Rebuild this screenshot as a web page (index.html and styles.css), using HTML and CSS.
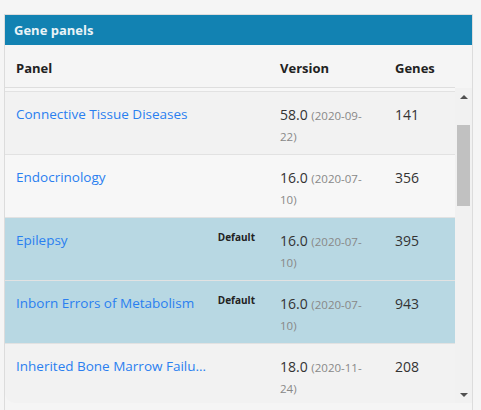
FILE: index.html
```html
<!DOCTYPE html>
<html lang="en">
<head>
  <meta charset="UTF-8" />
  <title>Gene panels</title>
  <link rel="stylesheet" href="styles.css">
</head>
<body>

  <!-- Gene panels card -->
  <div class="card">
    <div class="card-header">Gene panels</div>

    <!-- Fixed column headings -->
    <div class="head-wrap">
      <table class="grid">
        <colgroup>
          <col class="c-panel"><col class="c-version"><col class="c-genes">
        </colgroup>
        <thead>
          <tr><th>Panel</th><th>Version</th><th>Genes</th></tr>
        </thead>
      </table>
    </div>

    <!-- Rows + scrollbar -->
    <div class="body-row">
      <div class="rows">
        <div class="peek"></div>
        <table class="grid">
          <colgroup>
            <col class="c-panel"><col class="c-version"><col class="c-genes">
          </colgroup>
          <tbody>
            <tr>
              <td><a href="#" class="name">Connective Tissue Diseases</a></td>
              <td>58.0 <span class="date">(2020-09-22)</span></td>
              <td>141</td>
            </tr>
            <tr>
              <td><a href="#" class="name">Endocrinology</a></td>
              <td>16.0 <span class="date">(2020-07-10)</span></td>
              <td>356</td>
            </tr>
            <tr class="selected">
              <td><span class="badge">Default</span><a href="#" class="name">Epilepsy</a></td>
              <td>16.0 <span class="date">(2020-07-10)</span></td>
              <td>395</td>
            </tr>
            <tr class="selected">
              <td><span class="badge">Default</span><a href="#" class="name">Inborn Errors of Metabolism</a></td>
              <td>16.0 <span class="date">(2020-07-10)</span></td>
              <td>943</td>
            </tr>
            <tr>
              <td><a href="#" class="name">Inherited Bone Marrow Failure</a></td>
              <td>18.0 <span class="date">(2020-11-24)</span></td>
              <td>208</td>
            </tr>
          </tbody>
        </table>
      </div>

      <!-- Scrollbar -->
      <div class="scrollbar">
        <div class="arrow">
          <svg width="8" height="4" viewBox="0 0 8 4"><polygon points="0,4 4,0 8,4" fill="#505050"/></svg>
        </div>
        <div class="track">
          <div class="thumb"></div>
        </div>
        <div class="arrow">
          <svg width="8" height="4" viewBox="0 0 8 4"><polygon points="0,0 8,0 4,4" fill="#505050"/></svg>
        </div>
      </div>
    </div>
  </div>

</body>
</html>
```

FILE: styles.css
```css
/* ----- Base ----- */
* {
  box-sizing: border-box;
}

html, body {
  margin: 0;
  height: 100%;
  overflow: hidden;
  background: #f5f5f5;
  font-family: "Open Sans", "Noto Sans", sans-serif;
  font-size: 13px;
  color: #333;
}

/* ----- Card ----- */
.card {
  width: 469px;
  margin: 14px 0 0 4px;
  padding-bottom: 20px;
  border: 1px solid #dcdcdc;
  background: #f5f5f5;
}

.card-header {
  height: 30px;
  line-height: 30px;
  padding-left: 9px;
  background: #1282b2;
  color: #e9f3f7;
  font-weight: 700;
  font-size: 13px;
}

/* ----- Tables ----- */
.grid {
  width: 450px;
  table-layout: fixed;
  border-collapse: collapse;
}
.c-panel   { width: 264px; }
.c-version { width: 115px; }
.c-genes   { width: 71px; }

.head-wrap {
  height: 43px;
}
.head-wrap th {
  height: 42px;
  padding: 4px 11px 0;
  text-align: left;
  font-weight: 700;
  color: #222;
  background: #f5f5f5;
  border-bottom: 1px solid #dedede;
}

/* ----- Body with scrollbar ----- */
.body-row {
  display: flex;
  height: 315px;
}

.rows {
  width: 450px;
  overflow: hidden;
  border-bottom-left-radius: 10px;
}

/* bottom sliver of the row scrolled out above */
.peek {
  height: 3px;
  background: #f7f7f7;
}

.grid td {
  height: 63px;
  padding: 12px 11px 8px;
  line-height: 21px;
  font-size: 14px;
  vertical-align: top;
  border-top: 1px solid #e2e2e2;
}
.grid tbody tr:nth-child(odd) td  { background: #f2f2f2; }
.grid tbody tr:nth-child(even) td { background: #f7f7f7; }
.grid tbody tr.selected td        { background: #b8d8e3; }

.name {
  display: inline-block;
  max-width: 192px;
  vertical-align: top;
  overflow: hidden;
  white-space: nowrap;
  text-overflow: ellipsis;
  font-size: 13.5px;
  color: #2a7ff0;
  text-decoration: none;
}

.date {
  font-size: 11.5px;
  line-height: 1;
  color: #888;
}

.badge {
  float: right;
  margin-right: 3px;
  font-size: 10px;
  line-height: 14px;
  font-weight: 700;
  color: #222;
}

/* ----- Scrollbar ----- */
.scrollbar {
  width: 17px;
  display: flex;
  flex-direction: column;
  background: #f1f1f1;
}
.arrow {
  height: 17px;
  display: flex;
  align-items: center;
  justify-content: center;
}
.track {
  flex: 1;
  padding: 20px 2px 0;
}
.thumb {
  height: 81px;
  background: #c1c1c1;
}
```
